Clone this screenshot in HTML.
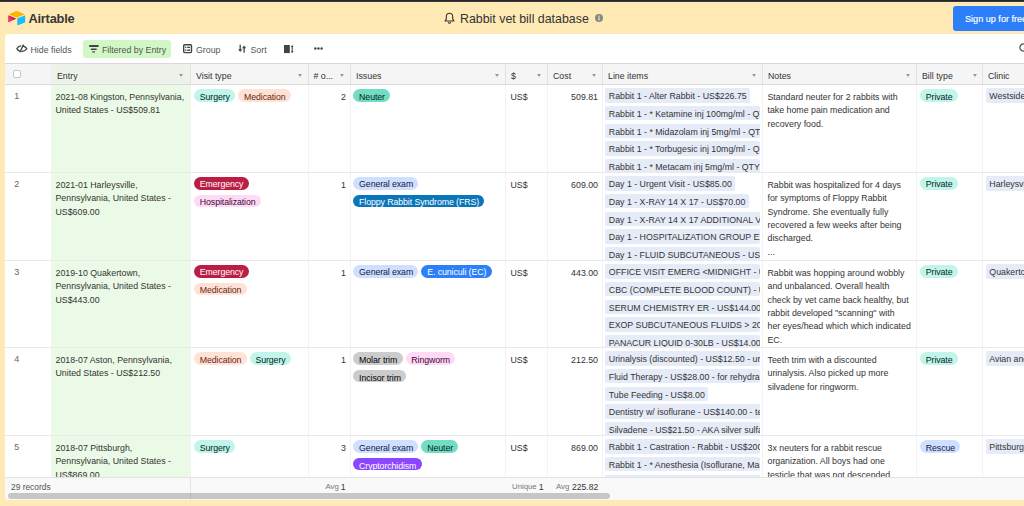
<!DOCTYPE html><html><head><meta charset="utf-8"><style>
*{box-sizing:border-box;margin:0;padding:0}
html,body{width:1024px;height:506px;overflow:hidden}
body{background:#ffeab6;position:relative;font-family:"Liberation Sans",sans-serif;color:#333;font-size:8.8px}
.abs{position:absolute}
.t{position:absolute;white-space:nowrap;line-height:13.33px}
.pill{position:absolute;height:12.5px;border-radius:7px;padding:0 5.3px 0 5.8px;line-height:15.4px;overflow:hidden;letter-spacing:-0.1px;white-space:nowrap}
.chip{position:absolute;height:14.7px;border-radius:2px;background:#e6ebf8;padding:0 3.5px;line-height:16px;white-space:nowrap;overflow:hidden;color:#333}
.vb{position:absolute;width:1px;background:#f3f3f3}
.hb{position:absolute;height:1px;background:#e4e4e4}
.arr{position:absolute;width:0;height:0;border-left:2.5px solid transparent;border-right:2.5px solid transparent;border-top:3px solid #999}
</style></head><body>

<div class="abs" style="left:0;top:0;width:1024px;height:1px;background:#24232f"></div><div class="abs" style="left:0;top:1px;width:1024px;height:1px;background:#3a3834"></div>
<svg class="abs" style="left:8px;top:10.5px" width="17.5" height="14.6" viewBox="10 9 180 152">
<path fill="#FCB400" d="M90.0389,12.3675 L24.0799,39.6605 C20.4119,41.1785 20.4499,46.3885 24.1409,47.8515 L90.3759,74.1175 C96.1959,76.4255 102.6769,76.4255 108.4959,74.1175 L174.7319,47.8515 C178.4219,46.3885 178.4609,41.1785 174.7919,39.6605 L108.8339,12.3675 C102.8159,9.8775 96.0559,9.8775 90.0389,12.3675"/>
<path fill="#18BFFF" d="M105.3122,88.4608 L105.3122,154.0768 C105.3122,157.1978 108.4592,159.3348 111.3602,158.1848 L185.1662,129.5368 C186.8512,128.8688 187.9562,127.2408 187.9562,125.4288 L187.9562,59.8128 C187.9562,56.6918 184.8092,54.5548 181.9082,55.7048 L108.1022,84.3528 C106.4182,85.0208 105.3122,86.6488 105.3122,88.4608"/>
<path fill="#F82B60" d="M88.0781,91.8464 L66.1741,102.4224 L63.9501,103.4974 L17.7121,125.6524 C14.7811,127.0664 11.0401,124.9304 11.0401,121.6744 L11.0401,60.0884 C11.0401,58.9104 11.6441,57.8934 12.4541,57.1274 C12.7921,56.7884 13.1751,56.5094 13.5731,56.2884 C14.6781,55.6254 16.2541,55.4484 17.5941,55.9784 L87.7101,83.7594 C91.2741,85.1734 91.5541,90.1674 88.0781,91.8464"/>
<path fill="rgba(0,0,0,0.25)" d="M88.0781,91.8464 L66.1741,102.4224 L12.4541,57.1274 C12.7921,56.7884 13.1751,56.5094 13.5731,56.2884 C14.6781,55.6254 16.2541,55.4484 17.5941,55.9784 L87.7101,83.7594 C91.2741,85.1734 91.5541,90.1674 88.0781,91.8464"/>
</svg>
<div class="t" style="left:28.5px;top:10px;font-size:12.8px;font-weight:700;color:#383838;line-height:18px;letter-spacing:-0.22px">Airtable</div>
<svg class="abs" style="left:443.5px;top:12px" width="11" height="12" viewBox="0 0 11 12"><path d="M5.5 1.2c-2 0-3.2 1.5-3.2 3.3v2.6L1 9h9L8.7 7.1V4.5c0-1.8-1.2-3.3-3.2-3.3z" fill="none" stroke="#333" stroke-width="1.1" stroke-linejoin="round"/><path d="M4.2 10.3c.3.6.7.9 1.3.9s1-.3 1.3-.9" fill="none" stroke="#333" stroke-width="1.1"/></svg>
<div class="t" style="left:460px;top:10.4px;font-size:12.4px;line-height:18px;color:#333">Rabbit vet bill database</div>
<svg class="abs" style="left:595px;top:13.5px" width="8" height="8" viewBox="0 0 8 8"><circle cx="4" cy="4" r="4" fill="#888"/><rect x="3.4" y="3.4" width="1.2" height="3" fill="#ffeab6"/><circle cx="4" cy="2.2" r="0.7" fill="#ffeab6"/></svg>
<div class="abs" style="left:953px;top:5.5px;width:90px;height:25px;background:#2d7ff9;border-radius:3px"></div>
<div class="t" style="left:965px;top:10.5px;font-size:9.1px;line-height:16px;color:#fff;font-weight:400;-webkit-text-stroke:0.15px #fff">Sign up for free</div>
<div class="abs" style="left:5px;top:34px;width:1030px;height:466px;background:#fff;border-radius:4px;overflow:hidden">
<svg class="abs" style="left:11px;top:10px" width="12" height="9" viewBox="0 0 12 9"><path d="M4.6 1.9 C3 2.3 1.7 3.3 0.9 4.6 C1.6 5.8 2.5 6.6 3.5 7.1" fill="none" stroke="#444" stroke-width="1.35" stroke-linecap="round"/><path d="M6.9 2 C8.6 2.3 9.9 3.3 10.8 4.6 C9.6 6.4 7.7 7.4 5.9 7.5" fill="none" stroke="#444" stroke-width="1.35" stroke-linecap="round"/><path d="M7.3 1.1 L4.1 7.8" stroke="#444" stroke-width="1.35" stroke-linecap="round"/></svg><div class="t" style="left:25.5px;top:9.600000000000001px;color:#555">Hide fields</div><div class="abs" style="left:77.7px;top:6.200000000000003px;width:88px;height:17.5px;background:#d1f7c4;border-radius:3px"></div><svg class="abs" style="left:83.9px;top:11.200000000000003px" width="10" height="8" viewBox="0 0 10 8"><rect x="0" y="0" width="9.8" height="1.9" rx=".9" fill="#444"/><rect x="1.7" y="3.6" width="6.2" height="1.4" rx=".7" fill="#444"/><rect x="3.1" y="6.2" width="3" height="1.4" rx=".7" fill="#444"/></svg><div class="t" style="left:97px;top:9.600000000000001px;color:#555">Filtered by Entry</div><svg class="abs" style="left:177.6px;top:10px" width="10" height="10" viewBox="0 0 10 10"><rect x=".7" y=".7" width="7.8" height="7.9" rx="1" fill="none" stroke="#444" stroke-width="1.4"/><rect x="2.2" y="2.7" width="1.2" height="1.3" fill="#444"/><rect x="4.2" y="2.7" width="2.9" height="1.3" fill="#444"/><rect x="2.2" y="5.5" width="1.2" height="1.4" fill="#444"/><rect x="4.2" y="5.5" width="2.9" height="1.4" fill="#444"/></svg><div class="t" style="left:191px;top:9.600000000000001px;color:#555">Group</div><svg class="abs" style="left:231px;top:9px" width="12" height="12" viewBox="0 0 12 12"><rect x="3.55" y="1.7" width="1.3" height="5.4" fill="#444"/><path d="M2.1 6.3 L6.3 6.3 L4.2 8.9z" fill="#444"/><rect x="7.45" y="4.3" width="1.3" height="5.4" fill="#444"/><path d="M6.0 5.2 L10.2 5.2 L8.1 2.4z" fill="#444"/></svg><div class="t" style="left:245.5px;top:9.600000000000001px;color:#555">Sort</div><svg class="abs" style="left:279px;top:10.700000000000003px" width="10" height="9" viewBox="0 0 10 9"><rect x="0" y="0" width="5.8" height="8.1" fill="#444"/><path d="M8.2 0.6 V7.6" stroke="#444" stroke-width="1.1"/><path d="M6.9 1.9 L8.2 0.3 L9.5 1.9z M6.9 6.2 L8.2 7.9 L9.5 6.2z" fill="#444"/></svg><svg class="abs" style="left:309px;top:13px" width="9" height="3" viewBox="0 0 9 3"><circle cx="1.3" cy="1.5" r="1.2" fill="#444"/><circle cx="4.45" cy="1.5" r="1.2" fill="#444"/><circle cx="7.6" cy="1.5" r="1.2" fill="#444"/></svg><svg class="abs" style="left:1013.5px;top:9.200000000000003px" width="12" height="12" viewBox="0 0 12 12"><circle cx="4.5" cy="4.5" r="3.6" fill="none" stroke="#555" stroke-width="1.3"/></svg>
<div class="hb" style="left:0;top:29px;width:1030px;background:#d9d9d9"></div>
<div class="abs" style="left:0;top:30px;width:1030px;height:20px;background:#f5f5f5"></div>
<div class="abs" style="left:46px;top:30px;width:139px;height:20px;background:#edf3ea"></div>
<div class="hb" style="left:0;top:50px;width:1030px;background:#dcdcdc"></div>
<div class="abs" style="left:46px;top:51px;width:139px;height:392px;background:#ebfae6"></div>
<div class="abs" style="left:8px;top:36px;width:8px;height:8px;border:1px solid #c5c5cc;border-radius:2px;background:#fff"></div>
<div class="t" style="left:52px;top:35.8px;color:#333">Entry</div>
<div class="arr" style="left:174.3px;top:39.8px"></div>
<div class="t" style="left:191px;top:35.8px;color:#333">Visit type</div>
<div class="arr" style="left:292.8px;top:39.8px"></div>
<div class="t" style="left:308.5px;top:35.8px;color:#333"># o...</div>
<div class="arr" style="left:335.3px;top:39.8px"></div>
<div class="t" style="left:351px;top:35.8px;color:#333">Issues</div>
<div class="arr" style="left:490.3px;top:39.8px"></div>
<div class="t" style="left:506px;top:35.8px;color:#333">$</div>
<div class="arr" style="left:532.3px;top:39.8px"></div>
<div class="t" style="left:548px;top:35.8px;color:#333">Cost</div>
<div class="arr" style="left:587.3px;top:39.8px"></div>
<div class="t" style="left:603px;top:35.8px;color:#333">Line items</div>
<div class="arr" style="left:747.3px;top:39.8px"></div>
<div class="t" style="left:763px;top:35.8px;color:#333">Notes</div>
<div class="arr" style="left:901.3px;top:39.8px"></div>
<div class="t" style="left:917px;top:35.8px;color:#333">Bill type</div>
<div class="arr" style="left:967.6999999999999px;top:39.8px"></div>
<div class="t" style="left:983px;top:35.8px;color:#333">Clinic</div>
<div class="vb" style="left:185px;top:30px;height:20px;background:#e2e2e2"></div>
<div class="vb" style="left:185px;top:51px;height:392px"></div>
<div class="vb" style="left:303px;top:30px;height:20px;background:#e2e2e2"></div>
<div class="vb" style="left:303px;top:51px;height:392px"></div>
<div class="vb" style="left:345px;top:30px;height:20px;background:#e2e2e2"></div>
<div class="vb" style="left:345px;top:51px;height:392px"></div>
<div class="vb" style="left:500px;top:30px;height:20px;background:#e2e2e2"></div>
<div class="vb" style="left:500px;top:51px;height:392px"></div>
<div class="vb" style="left:542px;top:30px;height:20px;background:#e2e2e2"></div>
<div class="vb" style="left:542px;top:51px;height:392px"></div>
<div class="vb" style="left:597px;top:30px;height:20px;background:#e2e2e2"></div>
<div class="vb" style="left:597px;top:51px;height:392px"></div>
<div class="vb" style="left:757px;top:30px;height:20px;background:#e2e2e2"></div>
<div class="vb" style="left:757px;top:51px;height:392px"></div>
<div class="vb" style="left:911px;top:30px;height:20px;background:#e2e2e2"></div>
<div class="vb" style="left:911px;top:51px;height:392px"></div>
<div class="vb" style="left:977px;top:30px;height:20px;background:#e2e2e2"></div>
<div class="vb" style="left:977px;top:51px;height:392px"></div>
<div class="vb" style="left:185px;top:443px;height:23px;background:#e3e3e3"></div>
<div class="hb" style="left:0;top:138px;width:1030px;background:#e8eaed"></div>
<div class="abs" style="left:0;top:51px;width:1030px;height:87px;overflow:hidden">
<div class="t" style="left:9.3px;top:5.300000000000001px;color:#666;font-size:9px">1</div>
<div class="t" style="left:50.5px;top:5.9px">2021-08 Kingston, Pennsylvania,</div>
<div class="t" style="left:50.5px;top:19.23px">United States - US$509.81</div>
<div class="abs" style="left:189px;top:4.3px;display:flex;gap:3px">
<div class="pill" style="position:relative;background:#c2f5e9;color:#012524;padding-top:1px">Surgery</div>
<div class="pill" style="position:relative;background:#fee2d5;color:#6b2613;padding-top:1px">Medication</div>
</div>
<div class="t" style="left:304px;top:5.9px;width:37px;text-align:right">2</div>
<div class="abs" style="left:348.3px;top:4.3px;display:flex;gap:3px">
<div class="pill" style="position:relative;background:#72ddc3;color:#012524;padding-top:1px">Neuter</div>
</div>
<div class="t" style="left:505.5px;top:5.9px">US$</div>
<div class="t" style="left:543px;top:5.9px;width:50px;text-align:right">509.81</div>
<div class="abs" style="left:600.3px;top:3px;width:154.70000000000005px">
<div style="display:block;margin-bottom:3.1px;height:14.7px"><span class="chip" style="position:relative;display:inline-block;max-width:154.70000000000005px">Rabbit 1 - Alter Rabbit - US$226.75</span></div>
<div style="display:block;margin-bottom:3.1px;height:14.7px"><span class="chip" style="position:relative;display:inline-block;max-width:154.70000000000005px">Rabbit 1 - * Ketamine inj 100mg/ml - QTY</span></div>
<div style="display:block;margin-bottom:3.1px;height:14.7px"><span class="chip" style="position:relative;display:inline-block;max-width:154.70000000000005px">Rabbit 1 - * Midazolam inj 5mg/ml - QTY</span></div>
<div style="display:block;margin-bottom:3.1px;height:14.7px"><span class="chip" style="position:relative;display:inline-block;max-width:154.70000000000005px">Rabbit 1 - * Torbugesic inj 10mg/ml - QTY</span></div>
<div style="display:block;margin-bottom:3.1px;height:14.7px"><span class="chip" style="position:relative;display:inline-block;max-width:154.70000000000005px">Rabbit 1 - * Metacam inj 5mg/ml - QTY 1</span></div>
</div>
<div class="t" style="left:762.5px;top:5.9px">Standard neuter for 2 rabbits with</div>
<div class="t" style="left:762.5px;top:19.23px">take home pain medication and</div>
<div class="t" style="left:762.5px;top:32.56px">recovery food.</div>
<div class="pill" style="left:915px;top:4.3px;background:#c2f5e9;color:#012524;padding-top:1px">Private</div>
<div class="chip" style="left:980.8px;top:3px">Westside Animal</div>
</div>
<div class="hb" style="left:0;top:226px;width:1030px;background:#e8eaed"></div>
<div class="abs" style="left:0;top:139px;width:1030px;height:87px;overflow:hidden">
<div class="t" style="left:9.3px;top:5.300000000000001px;color:#666;font-size:9px">2</div>
<div class="t" style="left:50.5px;top:5.9px">2021-01 Harleysville,</div>
<div class="t" style="left:50.5px;top:19.23px">Pennsylvania, United States -</div>
<div class="t" style="left:50.5px;top:32.56px">US$609.00</div>
<div class="abs" style="left:189px;top:4.3px;display:flex;gap:3px">
<div class="pill" style="position:relative;background:#ba1e45;color:#ffffff;padding-top:0px">Emergency</div>
</div>
<div class="abs" style="left:189px;top:21.5px;display:flex;gap:3px">
<div class="pill" style="position:relative;background:#ffdaf6;color:#400832;padding-top:0px">Hospitalization</div>
</div>
<div class="t" style="left:304px;top:5.9px;width:37px;text-align:right">1</div>
<div class="abs" style="left:348.3px;top:4.3px;display:flex;gap:3px">
<div class="pill" style="position:relative;background:#cfdfff;color:#102046;padding-top:0px">General exam</div>
</div>
<div class="abs" style="left:348.3px;top:21.5px;display:flex;gap:3px">
<div class="pill" style="position:relative;background:#0b76b7;color:#ffffff;padding-top:0px">Floppy Rabbit Syndrome (FRS)</div>
</div>
<div class="t" style="left:505.5px;top:5.9px">US$</div>
<div class="t" style="left:543px;top:5.9px;width:50px;text-align:right">609.00</div>
<div class="abs" style="left:600.3px;top:3px;width:154.70000000000005px">
<div style="display:block;margin-bottom:3.1px;height:14.7px"><span class="chip" style="position:relative;display:inline-block;max-width:154.70000000000005px">Day 1 - Urgent Visit - US$85.00</span></div>
<div style="display:block;margin-bottom:3.1px;height:14.7px"><span class="chip" style="position:relative;display:inline-block;max-width:154.70000000000005px">Day 1 - X-RAY 14 X 17 - US$70.00</span></div>
<div style="display:block;margin-bottom:3.1px;height:14.7px"><span class="chip" style="position:relative;display:inline-block;max-width:154.70000000000005px">Day 1 - X-RAY 14 X 17 ADDITIONAL VIEW</span></div>
<div style="display:block;margin-bottom:3.1px;height:14.7px"><span class="chip" style="position:relative;display:inline-block;max-width:154.70000000000005px">Day 1 - HOSPITALIZATION GROUP EXOTIC</span></div>
<div style="display:block;margin-bottom:3.1px;height:14.7px"><span class="chip" style="position:relative;display:inline-block;max-width:154.70000000000005px">Day 1 - FLUID SUBCUTANEOUS - US$30.00</span></div>
</div>
<div class="t" style="left:762.5px;top:5.9px">Rabbit was hospitalized for 4 days</div>
<div class="t" style="left:762.5px;top:19.23px">for symptoms of Floppy Rabbit</div>
<div class="t" style="left:762.5px;top:32.56px">Syndrome. She eventually fully</div>
<div class="t" style="left:762.5px;top:45.89px">recovered a few weeks after being</div>
<div class="t" style="left:762.5px;top:59.22px">discharged.</div>
<div class="t" style="left:762.5px;top:72.55000000000001px">...</div>
<div class="pill" style="left:915px;top:4.3px;background:#c2f5e9;color:#012524;padding-top:0px">Private</div>
<div class="chip" style="left:980.8px;top:3px">Harleysville</div>
</div>
<div class="hb" style="left:0;top:313px;width:1030px;background:#e8eaed"></div>
<div class="abs" style="left:0;top:227px;width:1030px;height:86px;overflow:hidden">
<div class="t" style="left:9.3px;top:5.300000000000001px;color:#666;font-size:9px">3</div>
<div class="t" style="left:50.5px;top:5.9px">2019-10 Quakertown,</div>
<div class="t" style="left:50.5px;top:19.23px">Pennsylvania, United States -</div>
<div class="t" style="left:50.5px;top:32.56px">US$443.00</div>
<div class="abs" style="left:189px;top:4.3px;display:flex;gap:3px">
<div class="pill" style="position:relative;background:#ba1e45;color:#ffffff;padding-top:0px">Emergency</div>
</div>
<div class="abs" style="left:189px;top:21.5px;display:flex;gap:3px">
<div class="pill" style="position:relative;background:#fee2d5;color:#6b2613;padding-top:0px">Medication</div>
</div>
<div class="t" style="left:304px;top:5.9px;width:37px;text-align:right">1</div>
<div class="abs" style="left:348.3px;top:4.3px;display:flex;gap:3px">
<div class="pill" style="position:relative;background:#cfdfff;color:#102046;padding-top:0px">General exam</div>
<div class="pill" style="position:relative;background:#2d7ff9;color:#ffffff;padding-top:0px">E. cuniculi (EC)</div>
</div>
<div class="t" style="left:505.5px;top:5.9px">US$</div>
<div class="t" style="left:543px;top:5.9px;width:50px;text-align:right">443.00</div>
<div class="abs" style="left:600.3px;top:3px;width:154.70000000000005px">
<div style="display:block;margin-bottom:3.1px;height:14.7px"><span class="chip" style="position:relative;display:inline-block;max-width:154.70000000000005px">OFFICE VISIT EMERG &lt;MIDNIGHT - US$</span></div>
<div style="display:block;margin-bottom:3.1px;height:14.7px"><span class="chip" style="position:relative;display:inline-block;max-width:154.70000000000005px">CBC (COMPLETE BLOOD COUNT) - US$</span></div>
<div style="display:block;margin-bottom:3.1px;height:14.7px"><span class="chip" style="position:relative;display:inline-block;max-width:154.70000000000005px">SERUM CHEMISTRY ER - US$144.00 - in</span></div>
<div style="display:block;margin-bottom:3.1px;height:14.7px"><span class="chip" style="position:relative;display:inline-block;max-width:154.70000000000005px">EXOP SUBCUTANEOUS FLUIDS &gt; 20 ML</span></div>
<div style="display:block;margin-bottom:3.1px;height:14.7px"><span class="chip" style="position:relative;display:inline-block;max-width:154.70000000000005px">PANACUR LIQUID 0-30LB - US$14.00 - 1</span></div>
</div>
<div class="t" style="left:762.5px;top:5.9px">Rabbit was hopping around wobbly</div>
<div class="t" style="left:762.5px;top:19.23px">and unbalanced. Overall health</div>
<div class="t" style="left:762.5px;top:32.56px">check by vet came back healthy, but</div>
<div class="t" style="left:762.5px;top:45.89px">rabbit developed "scanning" with</div>
<div class="t" style="left:762.5px;top:59.22px">her eyes/head which which indicated</div>
<div class="t" style="left:762.5px;top:72.55000000000001px">EC.</div>
<div class="pill" style="left:915px;top:4.3px;background:#c2f5e9;color:#012524;padding-top:0px">Private</div>
<div class="chip" style="left:980.8px;top:3px">Quakertown</div>
</div>
<div class="hb" style="left:0;top:401px;width:1030px;background:#e8eaed"></div>
<div class="abs" style="left:0;top:314px;width:1030px;height:87px;overflow:hidden">
<div class="t" style="left:9.3px;top:5.300000000000001px;color:#666;font-size:9px">4</div>
<div class="t" style="left:50.5px;top:5.9px">2018-07 Aston, Pennsylvania,</div>
<div class="t" style="left:50.5px;top:19.23px">United States - US$212.50</div>
<div class="abs" style="left:189px;top:4.3px;display:flex;gap:3px">
<div class="pill" style="position:relative;background:#fee2d5;color:#6b2613;padding-top:1px">Medication</div>
<div class="pill" style="position:relative;background:#c2f5e9;color:#012524;padding-top:1px">Surgery</div>
</div>
<div class="t" style="left:304px;top:5.9px;width:37px;text-align:right">1</div>
<div class="abs" style="left:348.3px;top:4.3px;display:flex;gap:3px">
<div class="pill" style="position:relative;background:#cccccc;color:#040404;padding-top:1px">Molar trim</div>
<div class="pill" style="position:relative;background:#ffdaf6;color:#400832;padding-top:1px">Ringworm</div>
</div>
<div class="abs" style="left:348.3px;top:21.5px;display:flex;gap:3px">
<div class="pill" style="position:relative;background:#cccccc;color:#040404;padding-top:1px">Incisor trim</div>
</div>
<div class="t" style="left:505.5px;top:5.9px">US$</div>
<div class="t" style="left:543px;top:5.9px;width:50px;text-align:right">212.50</div>
<div class="abs" style="left:600.3px;top:3px;width:154.70000000000005px">
<div style="display:block;margin-bottom:3.1px;height:14.7px"><span class="chip" style="position:relative;display:inline-block;max-width:154.70000000000005px">Urinalysis (discounted) - US$12.50 - urine</span></div>
<div style="display:block;margin-bottom:3.1px;height:14.7px"><span class="chip" style="position:relative;display:inline-block;max-width:154.70000000000005px">Fluid Therapy - US$28.00 - for rehydration</span></div>
<div style="display:block;margin-bottom:3.1px;height:14.7px"><span class="chip" style="position:relative;display:inline-block;max-width:154.70000000000005px">Tube Feeding - US$8.00</span></div>
<div style="display:block;margin-bottom:3.1px;height:14.7px"><span class="chip" style="position:relative;display:inline-block;max-width:154.70000000000005px">Dentistry w/ isoflurane - US$140.00 - teeth</span></div>
<div style="display:block;margin-bottom:3.1px;height:14.7px"><span class="chip" style="position:relative;display:inline-block;max-width:154.70000000000005px">Silvadene - US$21.50 - AKA silver sulfa</span></div>
</div>
<div class="t" style="left:762.5px;top:5.9px">Teeth trim with a discounted</div>
<div class="t" style="left:762.5px;top:19.23px">urinalysis. Also picked up more</div>
<div class="t" style="left:762.5px;top:32.56px">silvadene for ringworm.</div>
<div class="pill" style="left:915px;top:4.3px;background:#c2f5e9;color:#012524;padding-top:1px">Private</div>
<div class="chip" style="left:980.8px;top:3px">Avian and Exotic</div>
</div>
<div class="hb" style="left:0;top:443px;width:1030px;background:#e8eaed"></div>
<div class="abs" style="left:0;top:402px;width:1030px;height:41px;overflow:hidden">
<div class="t" style="left:9.3px;top:5.300000000000001px;color:#666;font-size:9px">5</div>
<div class="t" style="left:50.5px;top:5.9px">2018-07 Pittsburgh,</div>
<div class="t" style="left:50.5px;top:19.23px">Pennsylvania, United States -</div>
<div class="t" style="left:50.5px;top:32.56px">US$869.00</div>
<div class="abs" style="left:189px;top:4.3px;display:flex;gap:3px">
<div class="pill" style="position:relative;background:#c2f5e9;color:#012524;padding-top:1px">Surgery</div>
</div>
<div class="t" style="left:304px;top:5.9px;width:37px;text-align:right">3</div>
<div class="abs" style="left:348.3px;top:4.3px;display:flex;gap:3px">
<div class="pill" style="position:relative;background:#cfdfff;color:#102046;padding-top:1px">General exam</div>
<div class="pill" style="position:relative;background:#72ddc3;color:#012524;padding-top:1px">Neuter</div>
</div>
<div class="abs" style="left:348.3px;top:21.5px;display:flex;gap:3px">
<div class="pill" style="position:relative;background:#8b46ff;color:#ffffff;padding-top:1px">Cryptorchidism</div>
</div>
<div class="t" style="left:505.5px;top:5.9px">US$</div>
<div class="t" style="left:543px;top:5.9px;width:50px;text-align:right">869.00</div>
<div class="abs" style="left:600.3px;top:3px;width:154.70000000000005px">
<div style="display:block;margin-bottom:3.1px;height:14.7px"><span class="chip" style="position:relative;display:inline-block;max-width:154.70000000000005px">Rabbit 1 - Castration - Rabbit - US$200.00</span></div>
<div style="display:block;margin-bottom:3.1px;height:14.7px"><span class="chip" style="position:relative;display:inline-block;max-width:154.70000000000005px">Rabbit 1 - * Anesthesia (Isoflurane, Mask)</span></div>
<div style="display:block;margin-bottom:3.1px;height:14.7px"><span class="chip" style="position:relative;display:inline-block;max-width:154.70000000000005px">Rabbit 1 - * Pain injection - Buprenorphine</span></div>
</div>
<div class="t" style="left:762.5px;top:5.9px">3x neuters for a rabbit rescue</div>
<div class="t" style="left:762.5px;top:19.23px">organization. All boys had one</div>
<div class="t" style="left:762.5px;top:32.56px">testicle that was not descended</div>
<div class="t" style="left:762.5px;top:45.89px">and needed extra surgery.</div>
<div class="pill" style="left:915px;top:4.3px;background:#cfdfff;color:#102046;padding-top:1px">Rescue</div>
<div class="chip" style="left:980.8px;top:3px">Pittsburgh Spay</div>
</div>
<div class="abs" style="left:0;top:444px;width:1030px;height:23px;background:#f9f9f9"></div>
<div class="hb" style="left:0;top:443px;width:1030px;background:#e3e3e3"></div>
<div class="vb" style="left:185px;top:444px;height:23px;background:#e3e3e3"></div>
<div class="t" style="left:6px;top:446.5px;color:#555;font-size:8.4px">29 records</div>
<div class="t" style="left:320.5px;top:446px;color:#777;font-size:7.8px">Avg</div>
<div class="t" style="left:335.8px;top:446.5px;color:#333;font-size:8.8px">1</div>
<div class="t" style="left:507px;top:446px;color:#777;font-size:7.8px">Unique</div>
<div class="t" style="left:533.8px;top:446.5px;color:#333;font-size:8.8px">1</div>
<div class="t" style="left:551px;top:446px;color:#777;font-size:7.8px">Avg</div>
<div class="t" style="left:567px;top:446.5px;color:#333;font-size:8.6px">225.82</div>
<div class="abs" style="left:3px;top:459px;width:602px;height:6px;background:#c6c6c6;border-radius:3px"></div>
<div class="vb" style="left:185px;top:459px;height:6px;background:#b8b8b8"></div>
</div>
</body></html>
